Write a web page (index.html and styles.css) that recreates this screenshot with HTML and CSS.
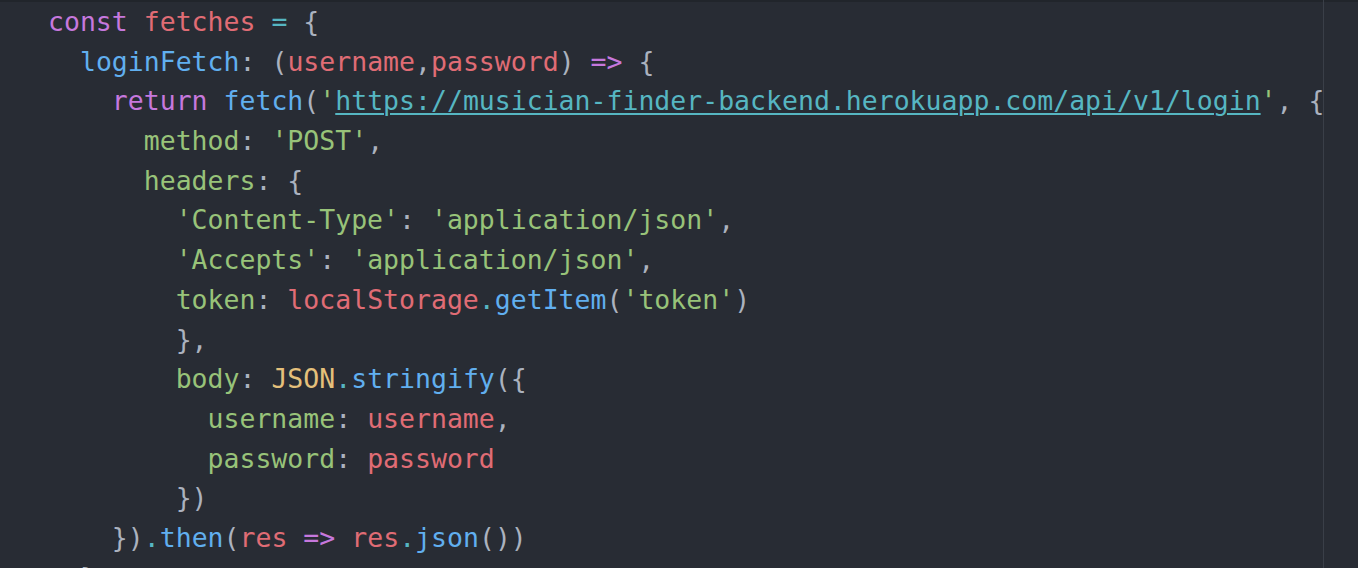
FILE: index.html
```html
<!DOCTYPE html>
<html>
<head>
<meta charset="utf-8">
<link rel="stylesheet" href="styles.css">
</head>
<body>
<div class="editor">
  <div class="topbar"></div>
  <div class="code">
    <div class="line"><span class="kw">const</span> <span class="var">fetches</span> <span class="op">=</span> <span class="p">{</span></div>
    <div class="line">  <span class="fn">loginFetch</span><span class="p">:</span> <span class="p">(</span><span class="var">username</span><span class="p">,</span><span class="var">password</span><span class="p">)</span> <span class="kw">=&gt;</span> <span class="p">{</span></div>
    <div class="line">    <span class="kw">return</span> <span class="fn">fetch</span><span class="p">(</span><span class="str">'</span><span class="url">https://musician-finder-backend.herokuapp.com/api/v1/login</span><span class="str">'</span><span class="p">,</span> <span class="p">{</span></div>
    <div class="line">      <span class="key">method</span><span class="p">:</span> <span class="str">'POST'</span><span class="p">,</span></div>
    <div class="line">      <span class="key">headers</span><span class="p">:</span> <span class="p">{</span></div>
    <div class="line">        <span class="str">'Content-Type'</span><span class="p">:</span> <span class="str">'application/json'</span><span class="p">,</span></div>
    <div class="line">        <span class="str">'Accepts'</span><span class="p">:</span> <span class="str">'application/json'</span><span class="p">,</span></div>
    <div class="line">        <span class="key">token</span><span class="p">:</span> <span class="var">localStorage</span><span class="op">.</span><span class="fn">getItem</span><span class="p">(</span><span class="str">'token'</span><span class="p">)</span></div>
    <div class="line">        <span class="p">},</span></div>
    <div class="line">        <span class="key">body</span><span class="p">:</span> <span class="cls">JSON</span><span class="op">.</span><span class="fn">stringify</span><span class="p">({</span></div>
    <div class="line">          <span class="key">username</span><span class="p">:</span> <span class="var">username</span><span class="p">,</span></div>
    <div class="line">          <span class="key">password</span><span class="p">:</span> <span class="var">password</span></div>
    <div class="line">        <span class="p">})</span></div>
    <div class="line">    <span class="p">})</span><span class="op">.</span><span class="fn">then</span><span class="p">(</span><span class="var">res</span> <span class="kw">=&gt;</span> <span class="var">res</span><span class="op">.</span><span class="fn">json</span><span class="p">())</span></div>
    <div class="line">  <span class="p">},</span></div>
  </div>
  <div class="wrap-guide"></div>
</div>
</body>
</html>
```

FILE: styles.css
```css
html, body {
  margin: 0;
  padding: 0;
  background: #282c34;
  overflow: hidden;
}

.editor {
  position: relative;
  width: 1358px;
  height: 568px;
  background: #282c34;
  overflow: hidden;
}

.topbar {
  height: 2px;
  background: #21252b;
}

.code {
  padding-left: 48px;
  font-family: "DejaVu Sans Mono", "Liberation Mono", monospace;
  font-size: 26.5px;
  line-height: 39.7px;
  color: #abb2bf;
}

.line {
  height: 39.7px;
  white-space: pre;
}

.kw { color: #c678dd; }
.var { color: #e06c75; }
.op { color: #56b6c2; }
.p { color: #abb2bf; }
.fn { color: #61afef; }
.key { color: #98c379; }
.str { color: #98c379; }
.cls { color: #e5c07b; }
.url {
  color: #56b6c2;
  text-decoration: underline;
  text-decoration-thickness: 2px;
  text-underline-offset: 3px;
}

.wrap-guide {
  position: absolute;
  top: 0;
  bottom: 0;
  left: 1323px;
  width: 1px;
  background: #3a3f48;
}
```
